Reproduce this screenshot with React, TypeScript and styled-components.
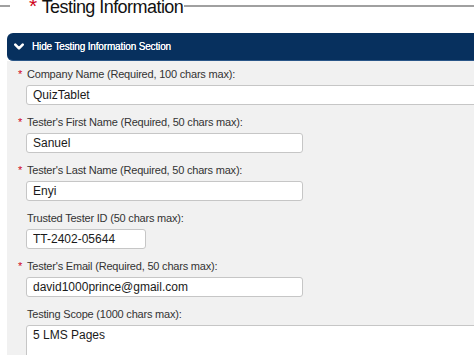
import React from 'react';
import styled, { createGlobalStyle } from 'styled-components';

const Global = createGlobalStyle`
  html, body { margin: 0; padding: 0; background: #fff; }
  body { font-family: "Liberation Sans", Arial, sans-serif; overflow: hidden; }
`;

const Page = styled.div`
  width: 474px;
  height: 355px;
  overflow: hidden;
`;

const LegendRow = styled.div`
  display: flex;
  align-items: center;
  margin-top: -5px;
  height: 22px;
`;

const Rule = styled.div<{ $grow?: boolean }>`
  height: 2px;
  background: #a0a0a0;
  ${(p) => (p.$grow ? 'flex: 1;' : 'width: 10px;')}
`;

const Legend = styled.h2`
  margin: 0;
  padding: 0 1px 0 19px;
  font-size: 18px;
  line-height: 22px;
  letter-spacing: -0.55px;
  font-weight: normal;
  color: #111;
  white-space: nowrap;
`;

const Star = styled.span<{ $big?: boolean }>`
  color: #d0021b;
  ${(p) =>
    p.$big
      ? 'font-size: 21px; line-height: 1; margin-right: 5px;'
      : 'display: inline-block; width: 9px; margin-left: -9px; font-size: 11px;'}
`;

const Section = styled.section`
  margin: 16px -14px 0 7px;
`;

const Bar = styled.button`
  display: flex;
  align-items: center;
  gap: 8px;
  width: 100%;
  height: 28px;
  padding: 0 0 0 7px;
  border: none;
  border-bottom: 1px solid #2a5688;
  border-radius: 6px;
  background: #07305e;
  color: #fff;
  font-family: inherit;
  font-size: 10px;
  letter-spacing: -0.15px;
  text-shadow: 0 0 0.4px #fff;
  text-align: left;
  cursor: pointer;
`;

const Panel = styled.div`
  background: #f1f1f1;
  padding: 6px 0 0 19px;
`;

const Field = styled.div`
  display: flex;
  flex-direction: column;
  align-items: flex-start;
  gap: 4px;
  margin-bottom: 10px;
`;

const Label = styled.label`
  font-size: 11px;
  line-height: 14px;
  color: #333;
  padding-left: 1px;
  letter-spacing: -0.2px;
`;

const TextInput = styled.input<{ $w: number }>`
  box-sizing: border-box;
  width: ${(p) => p.$w}px;
  height: 20px;
  padding: 0 6px;
  border: 1px solid #c6c6c6;
  border-radius: 3px;
  background: #fff;
  font-family: inherit;
  font-size: 12px;
  color: #1a1a1a;
  outline: none;
`;

const TextArea = styled.textarea`
  box-sizing: border-box;
  width: 470px;
  height: 70px;
  padding: 2px 6px;
  border: 1px solid #c6c6c6;
  border-radius: 3px;
  background: #fff;
  font-family: inherit;
  font-size: 12px;
  color: #1a1a1a;
  resize: none;
  outline: none;
`;

const Chevron = () => (
  <svg width="10" height="8" viewBox="0 0 10 8" aria-hidden="true">
    <path d="M1.3 1.6 L5 5.3 L8.7 1.6" fill="none" stroke="#fff" strokeWidth="2.6" strokeLinecap="round" strokeLinejoin="round" />
  </svg>
);

type F = { label: string; value: string; w: number; req?: boolean };

const fields: F[] = [
  { label: 'Company Name (Required, 100 chars max):', value: 'QuizTablet', w: 470, req: true },
  { label: "Tester's First Name (Required, 50 chars max):", value: 'Sanuel', w: 277, req: true },
  { label: "Tester's Last Name (Required, 50 chars max):", value: 'Enyi', w: 277, req: true },
  { label: 'Trusted Tester ID (50 chars max):', value: 'TT-2402-05644', w: 120 },
  { label: "Tester's Email (Required, 50 chars max):", value: 'david1000prince@gmail.com', w: 277, req: true },
];

export default function App() {
  return (
    <Page>
      <Global />
      <LegendRow>
        <Rule />
        <Legend>
          <Star $big>*</Star>Testing Information
        </Legend>
        <Rule $grow />
      </LegendRow>
      <Section>
        <Bar type="button">
          <Chevron />
          Hide Testing Information Section
        </Bar>
        <Panel>
          {fields.map((f) => (
            <Field key={f.label}>
              <Label>
                {f.req && <Star>*</Star>}
                {f.label}
              </Label>
              <TextInput $w={f.w} defaultValue={f.value} />
            </Field>
          ))}
          <Field>
            <Label>Testing Scope (1000 chars max):</Label>
            <TextArea defaultValue="5 LMS Pages" />
          </Field>
        </Panel>
      </Section>
    </Page>
  );
}
